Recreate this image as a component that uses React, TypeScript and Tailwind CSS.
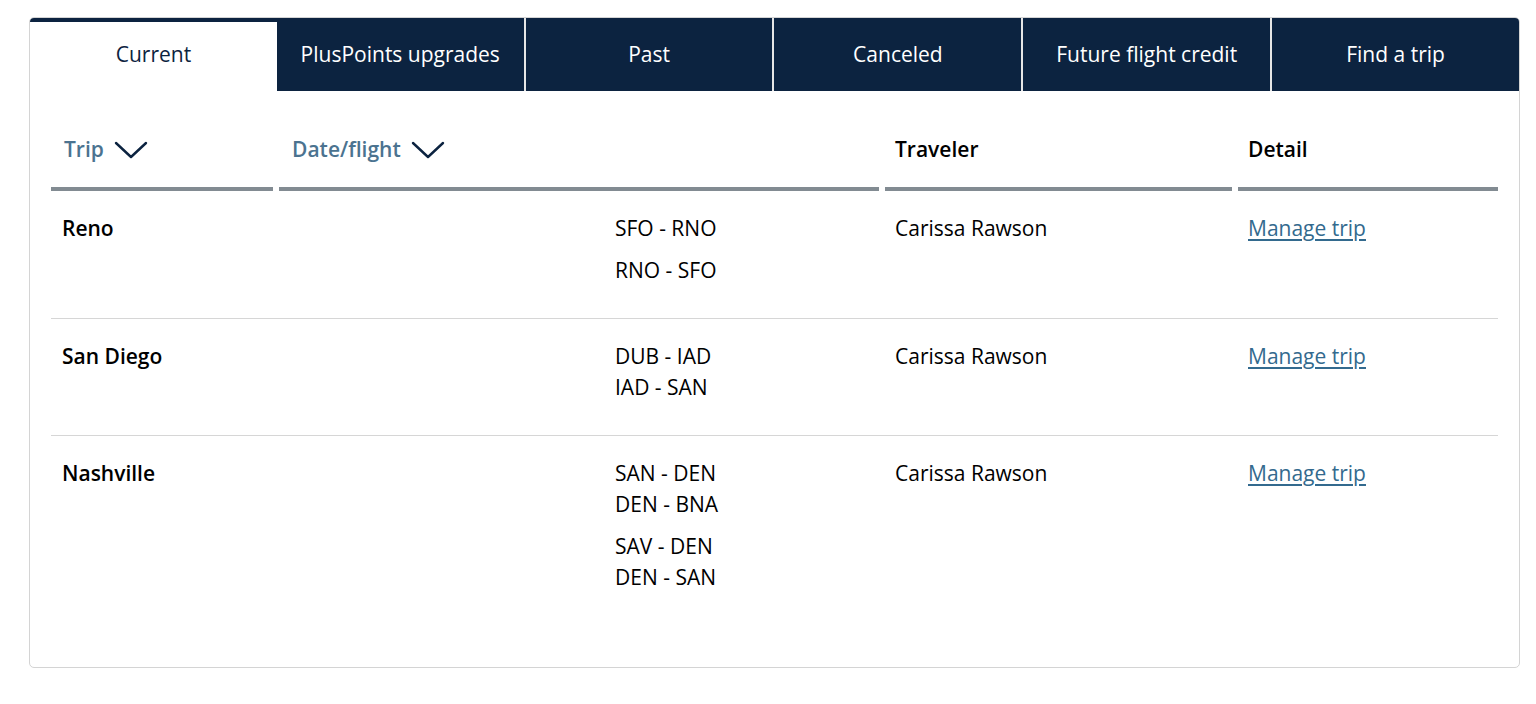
import React from 'react';

type Trip = {
  name: string;
  groups: string[][];
  traveler: string;
};

const trips: Trip[] = [
  { name: 'Reno', groups: [['SFO - RNO'], ['RNO - SFO']], traveler: 'Carissa Rawson' },
  { name: 'San Diego', groups: [['DUB - IAD', 'IAD - SAN']], traveler: 'Carissa Rawson' },
  {
    name: 'Nashville',
    groups: [
      ['SAN - DEN', 'DEN - BNA'],
      ['SAV - DEN', 'DEN - SAN'],
    ],
    traveler: 'Carissa Rawson',
  },
];

const tabs = ['Current', 'PlusPoints upgrades', 'Past', 'Canceled', 'Future flight credit', 'Find a trip'];

const Chevron: React.FC = () => (
  <svg width="34" height="20" viewBox="0 0 34 20" fill="none" className="ml-[10px]">
    <path d="M2 3 L17 17 L32 3" stroke="#0c2340" strokeWidth="2.4" strokeLinecap="round" strokeLinejoin="round" />
  </svg>
);

const cols = 'grid grid-cols-[222px_600px_347px_260px] gap-x-[6px]';

const App: React.FC = () => {
  return (
    <div className="min-h-[704px] bg-white pt-[17px] pl-[29px]" style={{ fontFamily: '"Open Sans", "Noto Sans", sans-serif' }}>
      <div className="w-[1491px] h-[651px] border border-[#d4d4d4] rounded-[5px] overflow-hidden">
        <div className="flex h-[73px]">
          {tabs.map((t, i) =>
            i === 0 ? (
              <div key={t} className="flex-1 flex items-center justify-center bg-white border-t-4 border-[#0c2340] pb-1 text-[21px] text-[#0c2340]">
                {t}
              </div>
            ) : (
              <div
                key={t}
                className={`flex-1 flex items-center justify-center bg-[#0c2340] text-white text-[21px] ${i > 1 ? 'border-l-2 border-[#e6e6e6]' : ''}`}
              >
                {t}
              </div>
            ),
          )}
        </div>

        <div className="px-[21px]">
          <div className={`${cols} mt-[43px] text-[21px] leading-[31px] font-semibold`}>
            <div className="flex items-center pl-[13px] pb-[22px] border-b-4 border-[#828b92] text-[#4b7390]">
              Trip
              <Chevron />
            </div>
            <div className="flex items-center pl-[13px] pb-[22px] border-b-4 border-[#828b92] text-[#4b7390]">
              Date/flight
              <Chevron />
            </div>
            <div className="flex items-center pl-[10px] pb-[22px] border-b-4 border-[#828b92] text-black">
              Traveler
            </div>
            <div className="flex items-center pl-[10px] pb-[22px] border-b-4 border-[#828b92] text-black">
              Detail
            </div>
          </div>

          {trips.map((trip, idx) => (
            <div
              key={trip.name}
              className={`${cols} pt-[22px] pb-[32px] text-[21px] leading-[31px] text-black ${idx < trips.length - 1 ? 'border-b border-[#d6d6d6]' : ''}`}
            >
              <div className="pl-[11px] font-semibold">{trip.name}</div>
              <div className="pl-[336px] flex flex-col gap-[11px]">
                {trip.groups.map((g, gi) => (
                  <div key={gi}>
                    {g.map((s) => (
                      <div key={s}>{s}</div>
                    ))}
                  </div>
                ))}
              </div>
              <div className="pl-[10px]">{trip.traveler}</div>
              <div className="pl-[10px]">
                <a href="#" className="underline text-[#336a8e] underline-offset-[3px]">
                  Manage trip
                </a>
              </div>
            </div>
          ))}
        </div>
      </div>
    </div>
  );
};

export default App;
